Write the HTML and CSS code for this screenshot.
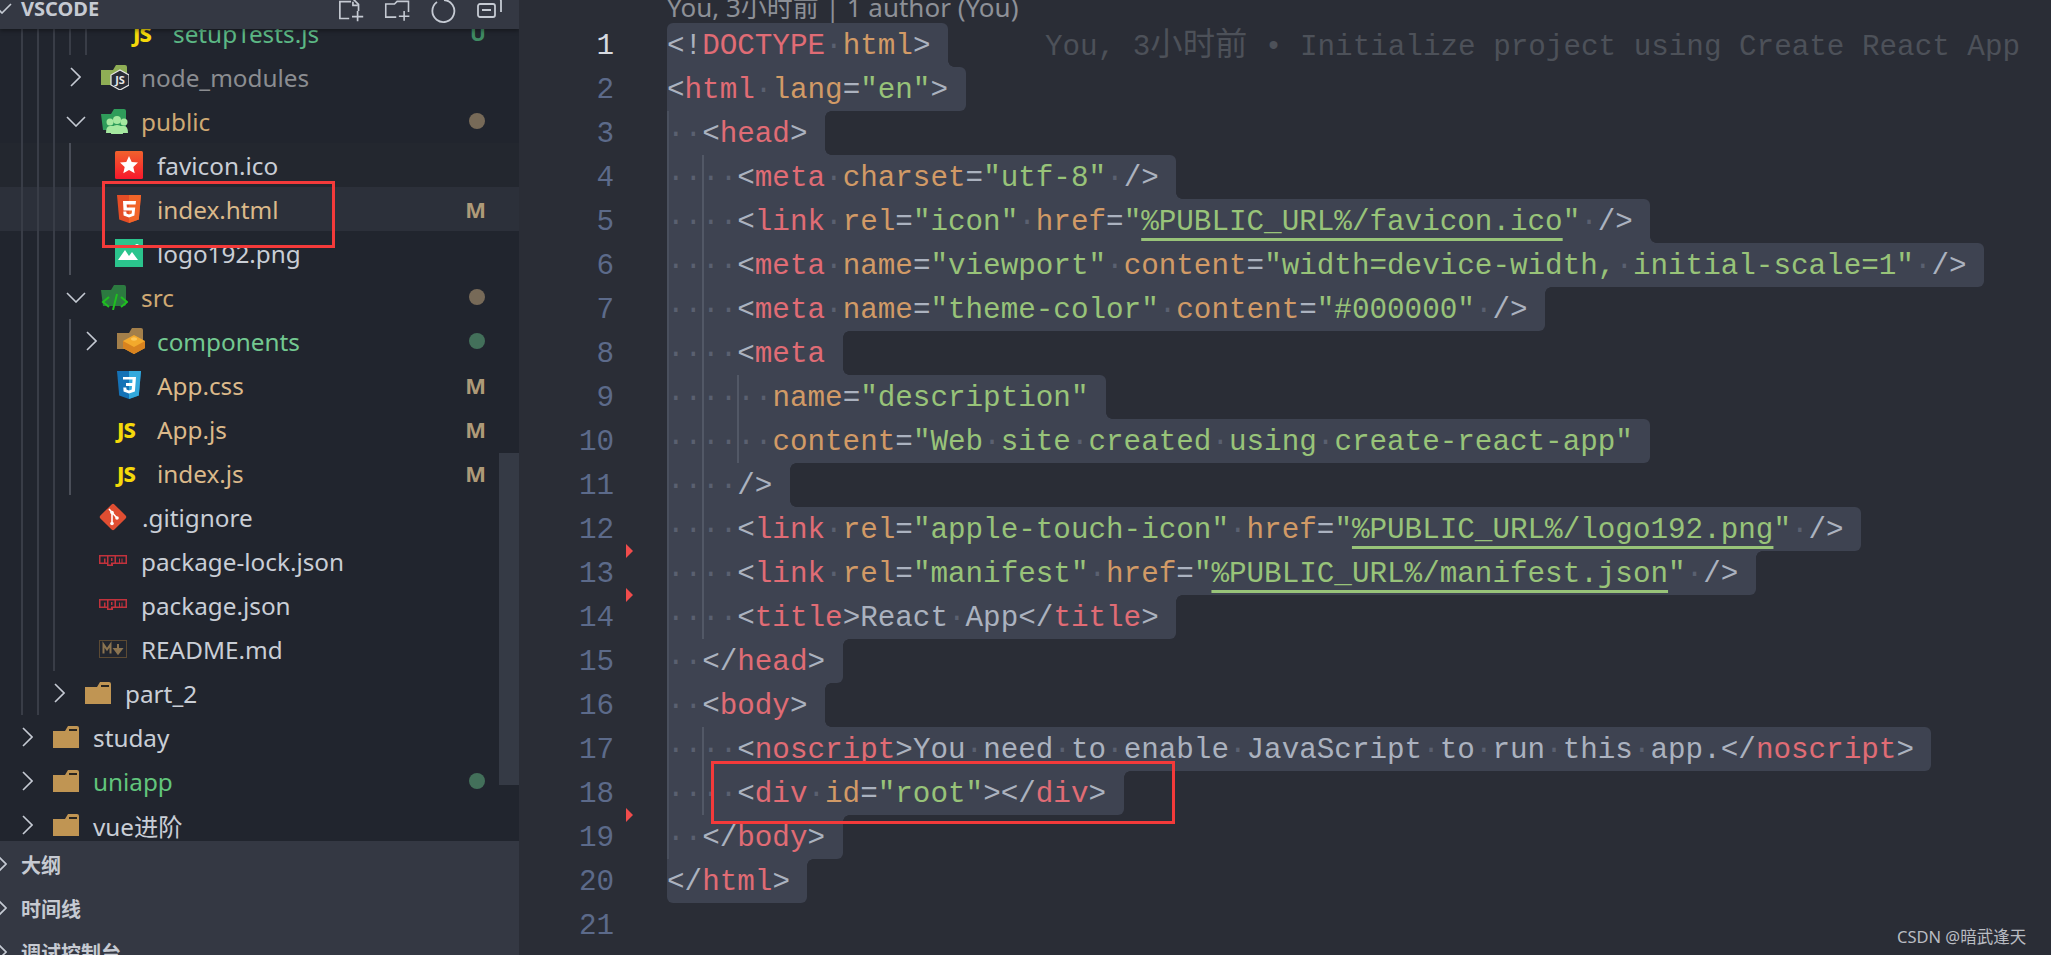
FILE: index.html
```html
<!DOCTYPE html>
<html lang="zh">
<head>
<meta charset="utf-8">
<title>VSCode</title>
<link rel="stylesheet" href="styles.css">
</head>
<body>
<svg class="defs" width="0" height="0">
  <symbol id="chev-r" viewBox="0 0 11 20"><path d="M1 1l9 9-9 9" fill="none" stroke="#c5cad3" stroke-width="1.6"/></symbol>
  <symbol id="chev-d" viewBox="0 0 20 11"><path d="M1 1l9 9 9-9" fill="none" stroke="#c5cad3" stroke-width="1.6"/></symbol>
  <symbol id="folder" viewBox="0 0 26 22"><path d="M0 5h12l3-5h9a2 2 0 0 1 2 2v20H0z" fill="#c09553"/><path d="M16 3h8v2h-8z" fill="#2a2620"/></symbol>
  <symbol id="npm" viewBox="0 0 28 12"><path fill-rule="evenodd" d="M0 0h28v9H14v2H8V9H0zM1.500 1.500v6H5v-4h1.500v4H8v-6zM9.500 1.500v8H12V7.500h3.500v-6zM12 3h1.500v3H12zM17 1.500v6h3v-4h1v4h1.500v-4h1v4h3v-6z" fill="#c1323c"/></symbol>
</svg>

<div class="sidebar">
  <div class="side-head">
    <div class="head-row">
      <svg class="head-chev"><use href="#chev-d"/></svg>
      <span class="head-title">VSCODE</span>
      <span class="head-actions">
        <svg class="act" viewBox="0 0 30 26"><path d="M14 3H2v18h10M16 3v4h5M16 0l6 6v7" fill="none" stroke="#c5cad3" stroke-width="1.8"/><path d="M21 13v11M15 19h12" stroke="#c5cad3" stroke-width="1.8"/></svg>
        <svg class="act" viewBox="0 0 32 26"><path d="M14 20H2V5h10l3-3h13v12" fill="none" stroke="#c5cad3" stroke-width="1.8"/><path d="M23 13v11M17 19h12" stroke="#c5cad3" stroke-width="1.8"/></svg>
        <svg class="act" viewBox="0 0 26 26"><path d="M6 4a11 11 0 1 0 7-2" fill="none" stroke="#c5cad3" stroke-width="1.8"/></svg>
        <svg class="act" viewBox="0 0 26 26"><rect x="1" y="6" width="17" height="13" rx="2" fill="none" stroke="#c5cad3" stroke-width="1.8"/><path d="M6 1h16q2 0 2 2v11M5 12h9" fill="none" stroke="#c5cad3" stroke-width="1.8"/></svg>
      </span>
    </div>
  </div>

  <div class="tree">
    <div class="row first g5 d6"><span class="inner"><span class="chev"></span><span class="ico js">JS</span><span class="name green-dim">setupTests.js</span><span class="badge-u">U</span></span></div>

    <div class="row g3 d4"><svg class="chev-r"><use href="#chev-r"/></svg>
      <svg class="ico fold big" viewBox="0 0 28 26"><path d="M0 6h12l3-5h9a2 2 0 0 1 2 2v18H0z" fill="#8fae55"/><path d="M19 6l9 5v10l-9 5-9-5V11z" fill="#2a2d36" stroke="#e7e7e7" stroke-width="1.200"/><text x="19" y="20" class="mini">JS</text></svg>
      <span class="name dim">node_modules</span></div>

    <div class="row g3 d4"><svg class="chev-d"><use href="#chev-d"/></svg>
      <svg class="ico fold wide" viewBox="0 0 30 26"><path d="M3 6h10l3-5h10a2 2 0 0 1 2 2v17q0 2-2 2H5z" fill="#2f9c5a"/><circle cx="19" cy="12" r="4" fill="#a5e8a0"/><circle cx="12" cy="14" r="3.500" fill="#a5e8a0"/><circle cx="26" cy="14" r="3.500" fill="#a5e8a0"/><path d="M8 25q0-7 4-7h14q4 0 4 7zM13 26q0-9 6-9t6 9z" fill="#a5e8a0"/></svg>
      <span class="name mod-dir">public</span><span class="dot amber"></span></div>

    <div class="row g4 d5 faint"><span class="chev"></span>
      <svg class="ico file" viewBox="0 0 28 28"><defs><linearGradient id="fav" x1="0" y1="0" x2="0" y2="1"><stop offset="0" stop-color="#f0622d"/><stop offset="1" stop-color="#f8182c"/></linearGradient></defs><rect width="28" height="28" rx="1.500" fill="url(#fav)"/><path d="M14 5l2.700 6 6.300.6-4.700 4.300 1.400 6.300L14 19l-5.700 3.200 1.400-6.300L5 11.600l6.300-.6z" fill="#fff"/></svg>
      <span class="name">favicon.ico</span></div>

    <div class="row g4 d5 active"><span class="chev"></span>
      <svg class="ico file" viewBox="0 0 28 28"><path d="M2 0h24l-2.200 24.500L14 28l-9.800-3.500z" fill="#e44d26"/><path d="M14 0h12l-2.200 24.500L14 28z" fill="#f16529"/><path d="M8 6h13l-.4 3.400h-9l.3 3.200h8.300l-.8 8L14 22.500l-5.400-1.900-.3-4h3l.2 2L14 19.500l2.700-.9.300-3H8.500z" fill="#fff"/></svg>
      <span class="name mod">index.html</span><span class="m">M</span></div>

    <div class="row g4 d5"><span class="chev"></span>
      <svg class="ico file" viewBox="0 0 28 28"><rect width="28" height="28" fill="#2bc48d"/><path d="M3 21l7-10 4 6 3-4 6 8z" fill="#fff"/><circle cx="22" cy="7" r="2" fill="#fff"/></svg>
      <span class="name">logo192.png</span></div>

    <div class="row g3 d4"><svg class="chev-d"><use href="#chev-d"/></svg>
      <svg class="ico fold wide" viewBox="0 0 30 26"><path d="M3 6h10l3-5h10a2 2 0 0 1 2 2v17q0 2-2 2H5z" fill="#2c7a40"/><path d="M11 13l-6 5 6 5M23 13l6 5-6 5M19 10l-4 16" fill="none" stroke="#1fc01f" stroke-width="2"/></svg>
      <span class="name mod-dir">src</span><span class="dot amber"></span></div>

    <div class="row g4 d5"><svg class="chev-r"><use href="#chev-r"/></svg>
      <svg class="ico fold big" viewBox="0 0 28 26"><path d="M0 5h12l3-5h9a2 2 0 0 1 2 2v19H0z" fill="#a37f4a"/><path d="M17 7l11 6v7l-11 6-11-6v-7z" fill="#f3a92c"/><path d="M6 13l11 6 11-6v7l-11 6-11-6z" fill="#d9831f"/><ellipse cx="17" cy="11" rx="3" ry="1.700" fill="#fcc75a"/></svg>
      <span class="name green">components</span><span class="dot sage"></span></div>

    <div class="row g4 d5"><span class="chev"></span>
      <svg class="ico file" viewBox="0 0 28 28"><path d="M2 0h24l-2.200 24.500L14 28l-9.800-3.500z" fill="#1572b6"/><path d="M14 0h12l-2.200 24.500L14 28z" fill="#33a9dc"/><path d="M8 6h13l-1.100 14.600L14 22.500l-5.400-1.900-.3-4h3l.2 2L14 19.500l2.700-.9.300-3.600H11v-3h6.300l.2-3.400H8z" fill="#fff"/></svg>
      <span class="name mod">App.css</span><span class="m">M</span></div>

    <div class="row g4 d5"><span class="chev"></span><span class="ico js">JS</span><span class="name mod">App.js</span><span class="m">M</span></div>
    <div class="row g4 d5"><span class="chev"></span><span class="ico js">JS</span><span class="name mod">index.js</span><span class="m">M</span></div>

    <div class="row g3 d4"><span class="chev"></span>
      <svg class="ico file4" viewBox="0 0 28 28"><rect x="4.100" y="4.100" width="19.800" height="19.800" rx="2" transform="rotate(45 14 14)" fill="#e04e32"/><path d="M10 6l8 9M13 9v12" stroke="#fff" stroke-width="1.600"/><circle cx="13" cy="9.500" r="1.800" fill="#fff"/><circle cx="13" cy="20.500" r="1.800" fill="#fff"/><circle cx="18" cy="15" r="1.800" fill="#fff"/></svg>
      <span class="name">.gitignore</span></div>

    <div class="row g3 d4"><span class="chev"></span><svg class="ico npm"><use href="#npm"/></svg><span class="name">package-lock.json</span></div>
    <div class="row g3 d4"><span class="chev"></span><svg class="ico npm"><use href="#npm"/></svg><span class="name">package.json</span></div>

    <div class="row g3 d4"><span class="chev"></span>
      <svg class="ico md" viewBox="0 0 28 18"><rect x=".5" y=".5" width="27" height="17" fill="none" stroke="#5c4a33"/><path d="M4.500 13.500v-9l3.500 5 3.500-5v9" fill="none" stroke="#8a7350" stroke-width="2"/><path d="M19 4v7M15.500 9l3.500 4.500 3.500-4.500z" stroke="#8a7350" stroke-width="2" fill="#8a7350"/></svg>
      <span class="name">README.md</span></div>

    <div class="row g2 d3"><svg class="chev-r"><use href="#chev-r"/></svg><svg class="ico fold"><use href="#folder"/></svg><span class="name">part_2</span></div>
    <div class="row d1"><svg class="chev-r"><use href="#chev-r"/></svg><svg class="ico fold"><use href="#folder"/></svg><span class="name">studay</span></div>
    <div class="row d1"><svg class="chev-r"><use href="#chev-r"/></svg><svg class="ico fold"><use href="#folder"/></svg><span class="name green2">uniapp</span><span class="dot sage"></span></div>
    <div class="row d1"><svg class="chev-r"><use href="#chev-r"/></svg><svg class="ico fold"><use href="#folder"/></svg><span class="name">vue进阶</span></div>
  </div>

  <div class="sections">
    <div class="sec"><svg class="sec-chev"><use href="#chev-r"/></svg><span>大纲</span></div>
    <div class="sec"><svg class="sec-chev"><use href="#chev-r"/></svg><span>时间线</span></div>
    <div class="sec"><svg class="sec-chev"><use href="#chev-r"/></svg><span>调试控制台</span></div>
  </div>

  <div class="scroll"></div>
</div>

<div class="editor">
  <div class="lens"><span>You, 3小时前 | 1 author (You)</span></div>

  <div class="ln"><span class="num cur">1</span><span class="sel tl tr cb"><i class="p">&lt;!</i><i class="t">DOCTYPE</i><i class="d">·</i><i class="a">html</i><i class="p">&gt;</i></span><span class="blame">You, 3<span class="cjk">小时前</span> • Initialize project using Create React App</span></div>
  <div class="ln"><span class="num">2</span><span class="sel tr br"><i class="p">&lt;</i><i class="t">html</i><i class="d">·</i><i class="a">lang</i><i class="p">=</i><i class="s">"en"</i><i class="p">&gt;</i></span></div>
  <div class="ln"><span class="num">3</span><span class="sel col0 ct cb"><i class="d">··</i><i class="p">&lt;</i><i class="t">head</i><i class="p">&gt;</i></span></div>
  <div class="ln"><span class="num">4</span><span class="sel col2 tr cb"><i class="d">····</i><i class="p">&lt;</i><i class="t">meta</i><i class="d">·</i><i class="a">charset</i><i class="p">=</i><i class="s">"utf-8"</i><i class="d">·</i><i class="p">/&gt;</i></span></div>
  <div class="ln"><span class="num">5</span><span class="sel col2 tr cb"><i class="d">····</i><i class="p">&lt;</i><i class="t">link</i><i class="d">·</i><i class="a">rel</i><i class="p">=</i><i class="s">"icon"</i><i class="d">·</i><i class="a">href</i><i class="p">=</i><i class="s">"<u>%PUBLIC_URL%/favicon.ico</u>"</i><i class="d">·</i><i class="p">/&gt;</i></span></div>
  <div class="ln"><span class="num">6</span><span class="sel col2 tr br"><i class="d">····</i><i class="p">&lt;</i><i class="t">meta</i><i class="d">·</i><i class="a">name</i><i class="p">=</i><i class="s">"viewport"</i><i class="d">·</i><i class="a">content</i><i class="p">=</i><i class="s">"width=device-width,<i class="d">·</i>initial-scale=1"</i><i class="d">·</i><i class="p">/&gt;</i></span></div>
  <div class="ln"><span class="num">7</span><span class="sel col2 ct br"><i class="d">····</i><i class="p">&lt;</i><i class="t">meta</i><i class="d">·</i><i class="a">name</i><i class="p">=</i><i class="s">"theme-color"</i><i class="d">·</i><i class="a">content</i><i class="p">=</i><i class="s">"#000000"</i><i class="d">·</i><i class="p">/&gt;</i></span></div>
  <div class="ln"><span class="num">8</span><span class="sel col2 ct cb"><i class="d">····</i><i class="p">&lt;</i><i class="t">meta</i></span></div>
  <div class="ln"><span class="num">9</span><span class="sel col4 tr cb"><i class="d">······</i><i class="a">name</i><i class="p">=</i><i class="s">"description"</i></span></div>
  <div class="ln"><span class="num">10</span><span class="sel col4 tr br"><i class="d">······</i><i class="a">content</i><i class="p">=</i><i class="s">"Web<i class="d">·</i>site<i class="d">·</i>created<i class="d">·</i>using<i class="d">·</i>create-react-app"</i></span></div>
  <div class="ln"><span class="num">11</span><span class="sel col2 ct cb"><i class="d">····</i><i class="p">/&gt;</i></span></div>
  <div class="ln"><span class="num">12</span><b class="mark"></b><span class="sel col2 tr br"><i class="d">····</i><i class="p">&lt;</i><i class="t">link</i><i class="d">·</i><i class="a">rel</i><i class="p">=</i><i class="s">"apple-touch-icon"</i><i class="d">·</i><i class="a">href</i><i class="p">=</i><i class="s">"<u>%PUBLIC_URL%/logo192.png</u>"</i><i class="d">·</i><i class="p">/&gt;</i></span></div>
  <div class="ln"><span class="num">13</span><b class="mark"></b><span class="sel col2 ct br"><i class="d">····</i><i class="p">&lt;</i><i class="t">link</i><i class="d">·</i><i class="a">rel</i><i class="p">=</i><i class="s">"manifest"</i><i class="d">·</i><i class="a">href</i><i class="p">=</i><i class="s">"<u>%PUBLIC_URL%/manifest.json</u>"</i><i class="d">·</i><i class="p">/&gt;</i></span></div>
  <div class="ln"><span class="num">14</span><span class="sel col2 ct br"><i class="d">····</i><i class="p">&lt;</i><i class="t">title</i><i class="p">&gt;</i><i class="x">React<i class="d">·</i>App</i><i class="p">&lt;/</i><i class="t">title</i><i class="p">&gt;</i></span></div>
  <div class="ln"><span class="num">15</span><span class="sel col0 ct br"><i class="d">··</i><i class="p">&lt;/</i><i class="t">head</i><i class="p">&gt;</i></span></div>
  <div class="ln"><span class="num">16</span><span class="sel col0 ct cb"><i class="d">··</i><i class="p">&lt;</i><i class="t">body</i><i class="p">&gt;</i></span></div>
  <div class="ln"><span class="num">17</span><span class="sel col2 tr br"><i class="d">····</i><i class="p">&lt;</i><i class="t">noscript</i><i class="p">&gt;</i><i class="x">You<i class="d">·</i>need<i class="d">·</i>to<i class="d">·</i>enable<i class="d">·</i>JavaScript<i class="d">·</i>to<i class="d">·</i>run<i class="d">·</i>this<i class="d">·</i>app.</i><i class="p">&lt;/</i><i class="t">noscript</i><i class="p">&gt;</i></span></div>
  <div class="ln"><span class="num">18</span><b class="mark"></b><span class="sel col2 ct br"><i class="d">····</i><i class="p">&lt;</i><i class="t">div</i><i class="d">·</i><i class="a">id</i><i class="p">=</i><i class="s">"root"</i><i class="p">&gt;&lt;/</i><i class="t">div</i><i class="p">&gt;</i></span></div>
  <div class="ln"><span class="num">19</span><span class="sel col0 ct br"><i class="d">··</i><i class="p">&lt;/</i><i class="t">body</i><i class="p">&gt;</i></span></div>
  <div class="ln"><span class="num">20</span><span class="sel ct bl br"><i class="p">&lt;/</i><i class="t">html</i><i class="p">&gt;</i></span></div>
  <div class="ln"><span class="num">21</span></div>
</div>

<div class="redbox box-tree"></div>
<div class="redbox box-code"></div>
<div class="watermark">CSDN @暗武逢天</div>
</body>
</html>
```
FILE: styles.css
```css
* { box-sizing: border-box; }
html, body { margin: 0; height: 955px; overflow: hidden; }
body {
  display: flex;
  position: relative;
  background: #2a2d36;
  font-family: "Noto Sans", "Noto Sans CJK SC", sans-serif;
}
.defs { position: absolute; }

/* sidebar */
.sidebar {
  position: relative;
  width: 519px;
  height: 955px;
  flex: none;
  display: flex;
  flex-direction: column;
  background: #21252e;
  overflow: hidden;
}
.side-head {
  height: 29px;
  flex: none;
  background: #343843;
  overflow: hidden;
  box-shadow: 0 2px 4px rgba(0, 0, 0, .35);
  position: relative;
  z-index: 2;
}
.head-row {
  height: 44px;
  margin-top: -14px;
  display: flex;
  align-items: center;
  padding-left: 21px;
}
.head-chev { width: 20px; height: 11px; margin-left: -29px; margin-right: 9px; }
.head-title { font-size: 20px; font-weight: 700; color: #c6cad2; }
.head-actions { margin-left: auto; display: flex; gap: 18px; margin-right: 15px; align-items: center; padding-top: 6px; }
.act { width: 28px; height: 26px; }

.tree {
  flex: 1;
  min-height: 0;
  overflow: hidden;
}
.row {
  height: 44px;
  display: flex;
  align-items: center;
  padding-right: 33px;
  font-size: 24.3px;
  color: #c9ced6;
  background-repeat: no-repeat;
}
.row.first { height: 26px; align-items: flex-end; overflow: hidden; }
.inner { display: flex; align-items: center; height: 44px; width: 100%; flex: none; }
.d1 { padding-left: 22px; }
.d3 { padding-left: 54px; }
.d4 { padding-left: 70px; }
.d5 { padding-left: 86px; }
.d6 { padding-left: 102px; }

/* indent guides */
.g2 { background-image: linear-gradient(#393d47, #393d47), linear-gradient(#393d47, #393d47); background-size: 2px 100%, 2px 100%; background-position: 21px 0, 37px 0; }
.g3 { background-image: linear-gradient(#393d47, #393d47), linear-gradient(#393d47, #393d47), linear-gradient(#393d47, #393d47); background-size: 2px 100%, 2px 100%, 2px 100%; background-position: 21px 0, 37px 0, 53px 0; }
.g4 { background-image: linear-gradient(#393d47, #393d47), linear-gradient(#393d47, #393d47), linear-gradient(#393d47, #393d47), linear-gradient(#4a4e58, #4a4e58); background-size: 2px 100%, 2px 100%, 2px 100%, 2px 100%; background-position: 21px 0, 37px 0, 53px 0, 69px 0; }
.g5 { background-image: linear-gradient(#393d47, #393d47), linear-gradient(#393d47, #393d47), linear-gradient(#393d47, #393d47), linear-gradient(#393d47, #393d47), linear-gradient(#393d47, #393d47); background-size: 2px 100%, 2px 100%, 2px 100%, 2px 100%, 2px 100%; background-position: 21px 0, 37px 0, 53px 0, 69px 0, 85px 0; }
.faint { background-color: #23272f; }
.active { background-color: #2c303a; }

.chev { width: 31px; flex: none; }
.chev-r { width: 11px; height: 20px; margin-right: 20px; flex: none; }
.chev-d { width: 20px; height: 11px; margin: 0 15px 0 -4px; flex: none; }
.ico { flex: none; display: block; }
.fold { width: 26px; height: 22px; margin-right: 14px; }
.fold.big { width: 28px; height: 26px; margin-right: 12px; }
.fold.wide { width: 30px; height: 26px; margin: 0 13px 0 -3px; }
.file { width: 28px; height: 28px; margin: 0 14px 0 -2px; }
.file4 { width: 28px; height: 28px; margin: 0 15px 0 -2px; }
.js { width: 24px; margin-right: 16px; font-size: 22px; font-weight: 800; letter-spacing: -1px; color: #f5d90a; line-height: 24px; }
.npm { width: 28px; height: 12px; margin: 0 14px 0 -2px; }
.md { width: 28px; height: 18px; margin: 0 14px 0 -2px; }
.mini { font: 700 11px "Noto Sans", sans-serif; fill: #e7e7e7; text-anchor: middle; }

.name { white-space: nowrap; }
.dim { color: #8b8d91; }
.mod { color: #dbb98a; }
.mod-dir { color: #cfa973; }
.green { color: #73c991; }
.green-dim { color: #5cb885; }
.green2 { color: #62c57c; }
.m { margin-left: auto; font-weight: 700; font-size: 22px; color: #ae9a78; }
.badge-u { margin-left: auto; font-weight: 700; font-size: 21px; color: #3f8a63; }
.dot { margin-left: auto; margin-right: 1px; width: 16px; height: 16px; border-radius: 50%; flex: none; }
.amber { background: #776a58; }
.sage { background: #43705a; }

.sections {
  flex: none;
  height: 114px;
  padding-top: 1px;
  background: #343843;
  overflow: hidden;
}
.sec {
  height: 44px;
  display: flex;
  align-items: center;
  padding-left: 21px;
  font-size: 20px;
  font-weight: 700;
  color: #c6cad2;
}
.sec-chev { width: 11px; height: 20px; margin-left: -25px; margin-right: 14px; }
.scroll {
  position: absolute;
  left: 499px;
  top: 453px;
  width: 20px;
  height: 332px;
  background: #353a45;
}

/* editor */
.editor {
  flex: 1;
  min-width: 0;
  height: 955px;
  overflow: hidden;
  background: #2a2d36;
  font-family: "Liberation Mono", "Noto Sans CJK SC", monospace;
  font-size: 29.27px;
  line-height: 48px;
  color: #abb2bf;
}
.lens {
  height: 23px;
  padding-left: 148px;
  overflow: hidden;
  display: flex;
  align-items: flex-end;
  font-family: "Noto Sans", "Noto Sans CJK SC", sans-serif;
  font-size: 26px;
  line-height: 30px;
  color: #8d9097;
}
.lens span { flex: none; margin-bottom: 1px; white-space: nowrap; }
.ln {
  position: relative;
  height: 44px;
  display: flex;
  white-space: pre;
}
.ln i { font-style: normal; }
.num {
  width: 95px;
  margin-right: 53px;
  text-align: right;
  color: #5c6a8a;
  flex: none;
}
.num.cur { color: #d7dae0; }
.sel {
  position: relative;
  display: block;
  height: 44px;
  padding-right: 1ch;
  background-color: #3e4351;
  background-repeat: no-repeat;
}
.col0 { background-image: linear-gradient(#4a505e, #4a505e); background-size: 2px 100%; background-position: 0 0; }
.col2 { background-image: linear-gradient(#4a505e, #4a505e), linear-gradient(#525866, #525866); background-size: 2px 100%, 2px 100%; background-position: 0 0, 35px 0; }
.col4 { background-image: linear-gradient(#4a505e, #4a505e), linear-gradient(#525866, #525866), linear-gradient(#525866, #525866); background-size: 2px 100%, 2px 100%, 2px 100%; background-position: 0 0, 35px 0, 70px 0; }
.tl { border-top-left-radius: 6px; }
.tr { border-top-right-radius: 6px; }
.br { border-bottom-right-radius: 6px; }
.bl { border-bottom-left-radius: 6px; }
.ct::before, .cb::after {
  content: "";
  position: absolute;
  left: 100%;
  width: 6px;
  height: 6px;
}
.ct::before { top: 0; background: radial-gradient(circle at 100% 100%, transparent 5.5px, #3e4351 6px); }
.cb::after { bottom: 0; background: radial-gradient(circle at 100% 0, transparent 5.5px, #3e4351 6px); }
.t { color: #e06c75; }
.a { color: #d19a66; }
.s { color: #98c379; }
.p { color: #abb2bf; }
.x { color: #abb2bf; }
.d { color: #5a6070; }
.s u {
  text-decoration: underline;
  text-decoration-color: #98c379;
  text-decoration-thickness: 3px;
  text-underline-offset: 8px;
  text-decoration-skip-ink: none;
}
.blame { margin-left: 97px; color: #4d5159; }
.cjk { font-size: 32.3px; }
.mark {
  position: absolute;
  left: 107px;
  bottom: -7px;
  width: 0;
  height: 0;
  border-left: 7px solid #f14c4c;
  border-top: 7px solid transparent;
  border-bottom: 7px solid transparent;
  z-index: 1;
}

/* annotations */
.redbox { position: absolute; border: 3px solid #f43a3a; z-index: 3; }
.box-tree { left: 102px; top: 181px; width: 233px; height: 67px; }
.box-code { left: 711px; top: 761px; width: 464px; height: 63px; }
.watermark {
  position: absolute;
  left: 1897px;
  top: 924px;
  font-family: "Noto Sans", "Noto Sans CJK SC", sans-serif;
  font-size: 16.5px;
  color: #b9bcc2;
  z-index: 3;
}
```
